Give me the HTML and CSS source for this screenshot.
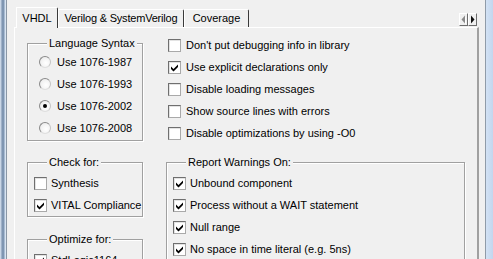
FILE: index.html
```html
<!DOCTYPE html>
<html>
<head>
<meta charset="utf-8">
<link rel="stylesheet" href="styles.css">
</head>
<body>
<div class="window">
  <div class="frame-left"></div>
  <div class="client">
    <div class="tabstrip">
      <div class="tab active tab-vhdl">VHDL</div>
      <div class="tab tab-verilog">Verilog &amp; SystemVerilog</div>
      <div class="tab tab-coverage">Coverage</div>
      <div class="scroller">
        <span class="sbtn"><svg width="7" height="11" viewBox="0 0 7 11"><path d="M5 1.5 L1.5 5.5 L5 9.5 Z" fill="#fff" transform="translate(1,1)"/><path d="M5 1.5 L1.5 5.5 L5 9.5 Z" fill="#8a8a8a"/></svg></span>
        <span class="sbtn"><svg width="7" height="11" viewBox="0 0 7 11"><path d="M2 1.5 L5.5 5.5 L2 9.5 Z" fill="#111"/></svg></span>
      </div>
    </div>
    <div class="page">
      <div class="col-left">
        <fieldset class="group g-lang">
          <legend>Language Syntax</legend>
          <div class="rows rows-radio">
            <div class="row radio-row"><span class="radio"></span>Use 1076-1987</div>
            <div class="row radio-row"><span class="radio"></span>Use 1076-1993</div>
            <div class="row radio-row"><span class="radio on"></span>Use 1076-2002</div>
            <div class="row radio-row"><span class="radio"></span>Use 1076-2008</div>
          </div>
        </fieldset>
        <fieldset class="group g-check">
          <legend>Check for:</legend>
          <div class="rows rows-cb">
            <div class="row"><span class="cb"></span>Synthesis</div>
            <div class="row"><span class="cb"><svg width="11" height="11" viewBox="0 0 11 11"><path d="M2 4.5 L4.5 7 L9 2.5 L9 5 L4.5 9.5 L2 7 Z" fill="#000"/></svg></span>VITAL Compliance</div>
          </div>
        </fieldset>
        <fieldset class="group g-opt">
          <legend>Optimize for:</legend>
          <div class="rows rows-cb">
            <div class="row"><span class="cb"><svg width="11" height="11" viewBox="0 0 11 11"><path d="M2 4.5 L4.5 7 L9 2.5 L9 5 L4.5 9.5 L2 7 Z" fill="#000"/></svg></span>StdLogic1164</div>
          </div>
        </fieldset>
      </div>
      <div class="col-right">
        <div class="opts">
          <div class="row"><span class="cb"></span>Don't put debugging info in library</div>
          <div class="row"><span class="cb"><svg width="11" height="11" viewBox="0 0 11 11"><path d="M2 4.5 L4.5 7 L9 2.5 L9 5 L4.5 9.5 L2 7 Z" fill="#000"/></svg></span>Use explicit declarations only</div>
          <div class="row"><span class="cb"></span>Disable loading messages</div>
          <div class="row"><span class="cb"></span>Show source lines with errors</div>
          <div class="row"><span class="cb"></span>Disable optimizations by using -O0</div>
        </div>
        <fieldset class="group g-warn">
          <legend>Report Warnings On:</legend>
          <div class="rows rows-cb">
            <div class="row"><span class="cb"><svg width="11" height="11" viewBox="0 0 11 11"><path d="M2 4.5 L4.5 7 L9 2.5 L9 5 L4.5 9.5 L2 7 Z" fill="#000"/></svg></span>Unbound component</div>
            <div class="row"><span class="cb"><svg width="11" height="11" viewBox="0 0 11 11"><path d="M2 4.5 L4.5 7 L9 2.5 L9 5 L4.5 9.5 L2 7 Z" fill="#000"/></svg></span>Process without a WAIT statement</div>
            <div class="row"><span class="cb"><svg width="11" height="11" viewBox="0 0 11 11"><path d="M2 4.5 L4.5 7 L9 2.5 L9 5 L4.5 9.5 L2 7 Z" fill="#000"/></svg></span>Null range</div>
            <div class="row"><span class="cb"><svg width="11" height="11" viewBox="0 0 11 11"><path d="M2 4.5 L4.5 7 L9 2.5 L9 5 L4.5 9.5 L2 7 Z" fill="#000"/></svg></span>No space in time literal (e.g. 5ns)</div>
          </div>
        </fieldset>
      </div>
    </div>
  </div>
  <div class="frame-right"></div>
</div>
</body>
</html>
```
FILE: styles.css
```css
html, body {
  margin: 0;
  padding: 0;
  background: #f0f0f0;
}
body {
  font-family: "Liberation Sans", Arial, sans-serif;
  font-size: 11px;
  color: #000;
}
.window {
  display: flex;
  width: 493px;
  height: 259px;
  overflow: hidden;
  background: #f0f0f0;
}
.frame-left {
  flex: none;
  width: 7px;
  background: linear-gradient(to right,
    #c9d6e6 0, #c9d6e6 1px,
    #9fb1c8 1px, #9fb1c8 2px,
    #7f96b2 2px, #7f96b2 4px,
    #a9bcd3 4px, #a9bcd3 5px,
    #d8e4f1 5px, #d8e4f1 6px,
    #8a97a6 6px, #8a97a6 7px);
}
.client {
  flex: none;
  width: 478px;
  display: flex;
  flex-direction: column;
}
.frame-right {
  flex: 1;
  border-left: 1px solid #8f9ba8;
  background: linear-gradient(to right, #d3e2f4, #c2d6ee);
}

/* tabs */
.tabstrip {
  flex: none;
  height: 27px;
  display: flex;
  align-items: flex-end;
  padding-left: 9px;
}
.tab {
  flex: none;
  box-sizing: border-box;
  height: 18px;
  padding: 0 0 1px 0;
  display: flex;
  align-items: center;
  justify-content: center;
  border-top: 1px solid #fff;
  border-left: 1px solid #fff;
  border-right: 1px solid #3a3a3a;
  border-top-right-radius: 2px;
  white-space: nowrap;
}
.tab-vhdl { width: 42px; }
.tab-verilog { width: 126px; letter-spacing: -0.2px; }
.tab-coverage { width: 65px; }
.tab.active {
  height: 21px;
  margin-bottom: -1px;
  padding-bottom: 0;
  position: relative;
  z-index: 1;
  background: #f0f0f0;
}
.scroller {
  margin-left: auto;
  margin-right: 8px;
  margin-bottom: 1px;
  display: flex;
}
.sbtn {
  box-sizing: border-box;
  width: 9px;
  height: 13px;
  display: flex;
  align-items: center;
  justify-content: center;
  background: #f0f0f0;
  border: 1px solid;
  border-color: #fff #6d6d6d #6d6d6d #fff;
}

/* page */
.page {
  flex: 1;
  box-sizing: border-box;
  margin-left: 7px;
  width: 465px;
  border-top: 1px solid #fff;
  border-left: 1px solid #fff;
  border-right: 2px solid #a0a0a0;
  padding: 6px 0 0 12px;
  display: flex;
  gap: 23px;
  align-items: flex-start;
}
.col-left {
  width: 116px;
  padding-top: 2px;
  display: flex;
  flex-direction: column;
}
.col-right {
  width: 299px;
  display: flex;
  flex-direction: column;
}

.group {
  margin: 0;
  padding: 0;
  min-width: 0;
  border: 1px solid #a0a0a0;
  box-shadow: inset 1px 1px 0 #fff, 1px 1px 0 #fff;
}
.group legend {
  margin-left: 19px;
  padding: 0 2px;
  line-height: 14px;
  background: #f0f0f0;
}
.g-check { margin-top: 14px; }
.g-opt { margin-top: 15px; }
.g-warn { margin-top: 11px; }

.rows-radio { padding: 1px 0 1px 11px; }
.rows-cb { padding: 3px 0 0 6px; }

.row {
  height: 22px;
  display: flex;
  align-items: center;
  gap: 4px;
  white-space: nowrap;
}
.radio-row { gap: 6px; }
.opts { padding-left: 2px; }
.opts .row { gap: 5px; }

.cb {
  flex: none;
  box-sizing: border-box;
  width: 13px;
  height: 13px;
  border: 1px solid;
  border-color: #6f6f6f #a9a9a9 #a9a9a9 #6f6f6f;
  background: #fff;
  box-shadow: inset 1px 1px 0 #e3e3e3;
  display: flex;
}
.cb svg { display: block; }

.radio {
  flex: none;
  box-sizing: border-box;
  width: 12px;
  height: 12px;
  border-radius: 50%;
  border: 1px solid;
  border-color: #8a8a8a #c4c4c4 #dedede #8a8a8a;
  background: radial-gradient(circle at 60% 60%, #ffffff 0, #f4f4f4 50%, #e2e2e2 100%);
  display: flex;
  align-items: center;
  justify-content: center;
}
.radio.on::after {
  content: "";
  width: 4px;
  height: 4px;
  border-radius: 50%;
  background: #000;
}
```
